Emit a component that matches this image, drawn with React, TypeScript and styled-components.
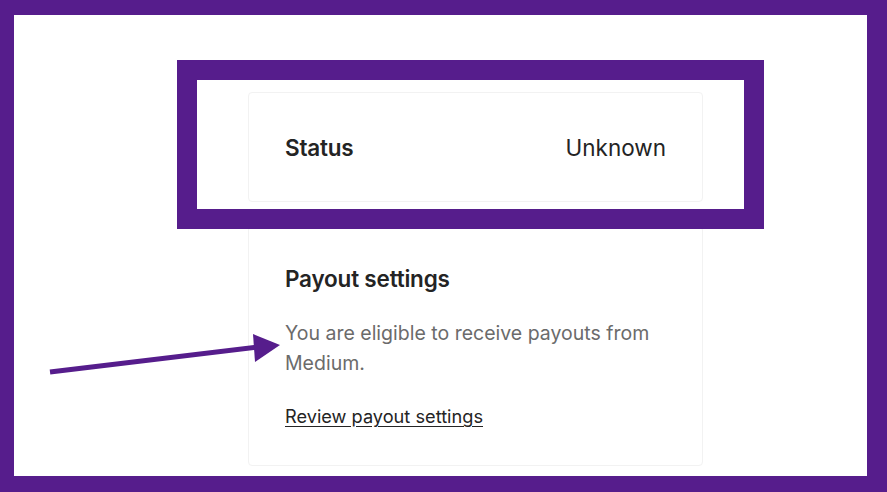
import * as React from 'react'
import styled, { createGlobalStyle } from 'styled-components'

const purple = '#561d8c'

const GlobalStyle = createGlobalStyle`
  html, body {
    margin: 0;
    padding: 0;
  }
  body {
    font-family: Inter, "Liberation Sans", sans-serif;
    color: #242424;
  }
`

const Frame = styled('div')`
  box-sizing: border-box;
  height: 492px;
  padding: 15px 20px 16px 14px;
  background: ${purple};
`

const Sheet = styled('div')`
  position: relative;
  height: 100%;
  background: #fff;
  overflow: hidden;
`

const Column = styled('main')`
  display: flex;
  flex-flow: column;
  gap: 24px;
  width: 455px;
  padding: 77px 0 0 234px;
`

const Card = styled('section')`
  box-sizing: border-box;
  border: 1px solid #f2f2f2;
  border-radius: 4px;
  background: #fff;
`

const StatusCard = styled(Card)`
  display: flex;
  align-items: center;
  justify-content: space-between;
  height: 110px;
  padding: 0 36px;
  font-size: 22.5px;
`

const Label = styled('span')`
  font-weight: 600;
  letter-spacing: -0.2px;
`

const Value = styled('span')`
  font-weight: 400;
`

const PayoutCard = styled(Card)`
  padding: 38px 36px 37px;
`

const Heading = styled('h2')`
  margin: 0;
  font-size: 22.5px;
  line-height: 28px;
  font-weight: 600;
  letter-spacing: -0.2px;
`

const Body = styled('p')`
  margin: 25px 0 0;
  font-size: 19.5px;
  line-height: 30px;
  color: #6b6b6b;
`

const ReviewLink = styled('a')`
  display: inline-block;
  margin-top: 26px;
  font-size: 18.2px;
  line-height: 24px;
  color: #242424;
  text-decoration: underline;
  text-underline-offset: 3px;
`

const Highlight = styled('div')`
  position: absolute;
  left: 163px;
  top: 45px;
  width: 587px;
  height: 169px;
  box-sizing: border-box;
  border: 20px solid ${purple};
  pointer-events: none;
`

const Arrow = styled('svg')`
  position: absolute;
  left: 0;
  top: 0;
  pointer-events: none;
`

export default function App() {
  return (
    <>
      <GlobalStyle />
      <Frame>
        <Sheet>
          <Column>
            <StatusCard>
              <Label>Status</Label>
              <Value>Unknown</Value>
            </StatusCard>
            <PayoutCard>
              <Heading>Payout settings</Heading>
              <Body>
                You are eligible to receive payouts from
                <br />
                Medium.
              </Body>
              <ReviewLink href="#">Review payout settings</ReviewLink>
            </PayoutCard>
          </Column>
          <Highlight />
          <Arrow width="300" height="400" viewBox="0 0 300 400">
            <line x1="36" y1="357" x2="244" y2="332" stroke={purple} strokeWidth="5" />
            <polygon points="239,319 266,330 241,347" fill={purple} />
          </Arrow>
        </Sheet>
      </Frame>
    </>
  )
}
